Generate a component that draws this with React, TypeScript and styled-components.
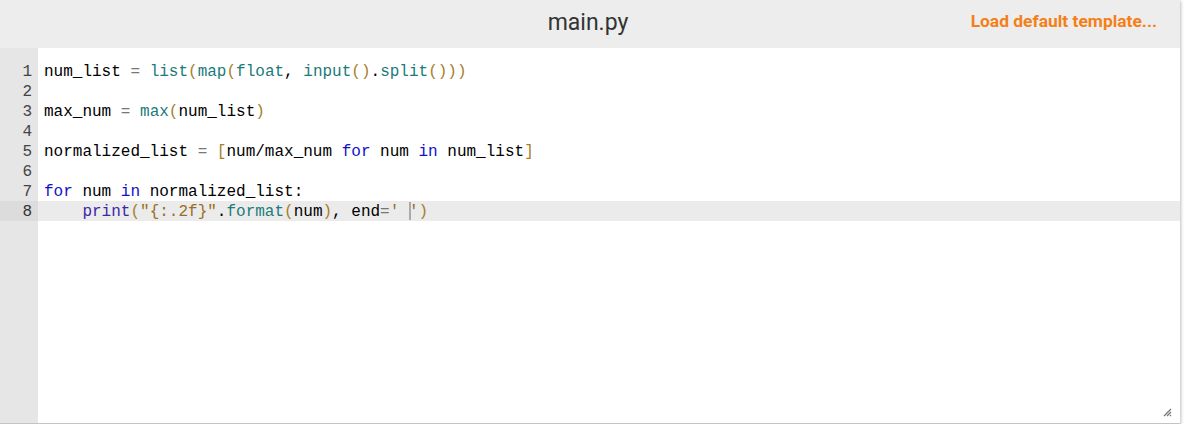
import React from 'react';
import styled, { createGlobalStyle } from 'styled-components';

type Kind = 'id' | 'op' | 'fn' | 'br' | 'kw' | 'str' | 'pr' | 'cursor';
type Token = [Kind, string];

const lines: Token[][] = [
  [
    ['id', 'num_list '],
    ['op', '='],
    ['id', ' '],
    ['fn', 'list'],
    ['br', '('],
    ['fn', 'map'],
    ['br', '('],
    ['fn', 'float'],
    ['id', ', '],
    ['fn', 'input'],
    ['br', '()'],
    ['id', '.'],
    ['fn', 'split'],
    ['br', '()))'],
  ],
  [],
  [
    ['id', 'max_num '],
    ['op', '='],
    ['id', ' '],
    ['fn', 'max'],
    ['br', '('],
    ['id', 'num_list'],
    ['br', ')'],
  ],
  [],
  [
    ['id', 'normalized_list '],
    ['op', '='],
    ['id', ' '],
    ['br', '['],
    ['id', 'num/max_num '],
    ['kw', 'for'],
    ['id', ' num '],
    ['kw', 'in'],
    ['id', ' num_list'],
    ['br', ']'],
  ],
  [],
  [
    ['kw', 'for'],
    ['id', ' num '],
    ['kw', 'in'],
    ['id', ' normalized_list:'],
  ],
  [
    ['id', '    '],
    ['pr', 'print'],
    ['br', '('],
    ['str', '"{:.2f}"'],
    ['id', '.'],
    ['fn', 'format'],
    ['br', '('],
    ['id', 'num'],
    ['br', ')'],
    ['id', ', end'],
    ['op', '='],
    ['str', "' "],
    ['cursor', ''],
    ['str', "'"],
    ['br', ')'],
  ],
];

const ACTIVE = 7;

export default function App() {
  return (
    <>
      <GlobalStyle />
      <Panel>
        <Header>
          <FileName>main.py</FileName>
          <LoadLink>Load default template...</LoadLink>
        </Header>
        <Editor>
          <Gutter>
            {lines.map((_, i) => (
              <LineNumber key={i} $active={i === ACTIVE}>
                {i + 1}
              </LineNumber>
            ))}
          </Gutter>
          <Code>
            {lines.map((line, i) => (
              <CodeLine key={i} $active={i === ACTIVE}>
                {line.map(([kind, text], j) =>
                  kind === 'cursor' ? (
                    <Cursor key={j} />
                  ) : (
                    <Tok key={j} $kind={kind}>
                      {text}
                    </Tok>
                  )
                )}
              </CodeLine>
            ))}
          </Code>
          <Grip viewBox='0 0 10 10'>
            <path d='M9 2 L2 9 M9 5 L5 9 M9 8 L8 9' stroke='#777' strokeWidth='1.3' />
          </Grip>
        </Editor>
      </Panel>
    </>
  );
}

const colors: Record<Kind, string> = {
  id: '#000000',
  op: '#777777',
  fn: '#1b7a7a',
  br: '#a67f2a',
  kw: '#1010c8',
  str: '#9a6e1e',
  pr: '#3a27a8',
  cursor: '#aaaaaa',
};

const GlobalStyle = createGlobalStyle`
  body {
    margin: 0;
    background: #fff;
    font-family: Roboto, sans-serif;
  }
`;

const Panel = styled.div`
  width: 1180px;
  height: 424px;
  display: flex;
  flex-direction: column;
  box-shadow: 1px 1px 3px rgba(0, 0, 0, 0.25);
  border-bottom: 1px solid #c4c4c4;
  box-sizing: border-box;
`;

const Header = styled.div`
  position: relative;
  height: 48px;
  flex: none;
  background: #ededed;
  display: flex;
  align-items: center;
  justify-content: center;
`;

const FileName = styled.div`
  font-family: Roboto, sans-serif;
  font-size: 23px;
  color: #333;
  margin-top: -4px;
  margin-left: -4px;
`;

const LoadLink = styled.a`
  position: absolute;
  right: 23px;
  top: 11px;
  font-family: Roboto, sans-serif;
  font-weight: bold;
  font-size: 17.4px;
  color: #f57f17;
  cursor: pointer;
`;

const Editor = styled.div`
  position: relative;
  flex: 1;
  display: flex;
  background: #fff;
`;

const Gutter = styled.div`
  width: 38px;
  flex: none;
  background: #e6e6e6;
  padding-top: 13px;
`;

const LineNumber = styled.div<{ $active: boolean }>`
  height: 20px;
  line-height: 22px;
  text-align: right;
  padding-right: 6px;
  font-family: 'Liberation Mono', monospace;
  font-size: 16px;
  color: ${(p) => (p.$active ? '#333' : '#444')};
  background: ${(p) => (p.$active ? '#dcdcdc' : 'transparent')};
`;

const Code = styled.div`
  flex: 1;
  padding-top: 13px;
`;

const CodeLine = styled.div<{ $active: boolean }>`
  height: 20px;
  line-height: 22px;
  padding-left: 6px;
  white-space: pre;
  font-family: 'Liberation Mono', monospace;
  font-size: 16px;
  background: ${(p) => (p.$active ? '#ebebeb' : 'transparent')};
`;

const Tok = styled.span<{ $kind: Kind }>`
  color: ${(p) => colors[p.$kind]};
`;

const Cursor = styled.span`
  display: inline-block;
  width: 0;
  height: 18px;
  vertical-align: -4px;
  border-left: 2px solid #aaa;
  margin-right: -2px;
`;

const Grip = styled.svg`
  position: absolute;
  right: 8px;
  bottom: 6px;
  width: 10px;
  height: 10px;
`;
